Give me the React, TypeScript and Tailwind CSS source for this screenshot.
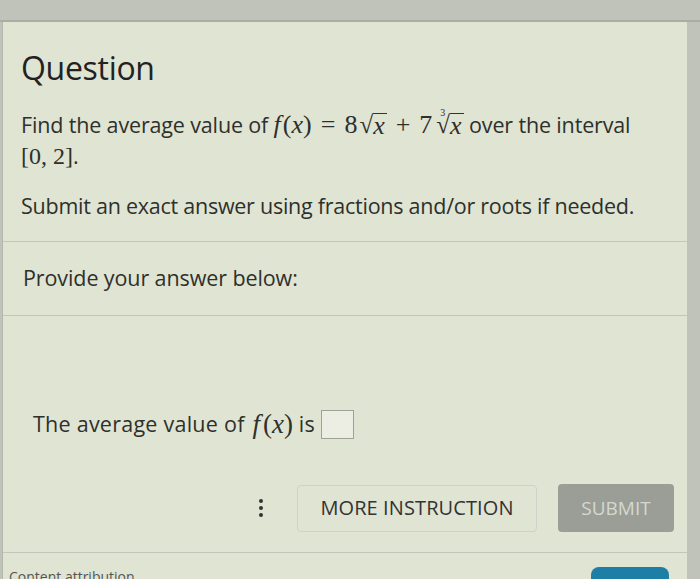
import React from 'react';

function Sqrt({ index, children }: { index?: string; children: React.ReactNode }) {
  return (
    <span className={`relative inline-flex items-end ${index ? 'ml-[4px]' : 'ml-[2px]'}`}>
      {index && <span className="absolute left-[4px] top-[-4px] text-[10px] leading-none">{index}</span>}
      <span className="text-[25px] leading-none">√</span>
      <span className="border-t border-[#333] leading-[23px] pr-[2px] italic">{children}</span>
    </span>
  );
}

function App() {
  const serif = { fontFamily: '"Liberation Serif", serif' };
  return (
    <div
      className="w-[700px] h-[579px] overflow-hidden bg-[#bfc3ba] text-[#2e302c]"
      style={{ fontFamily: '"Open Sans", sans-serif' }}
    >
      <div className="h-[22px] border-b-2 border-[#a9ada4]" />
      <div className="flex">
        <div className="w-[685px] ml-[2px] bg-[#e0e4d3] border-l border-[#b5b9ad]">
          <div className="px-[18px] pt-[26px] pb-[20px] border-b border-[#c3c7ba]">
            <h1 className="text-[32px] leading-[40px] font-medium tracking-[-0.3px] text-[#222]">Question</h1>
            <p className="mt-[21px] text-[21.5px] leading-[31px] tracking-[-0.15px]">
              Find the average value of{' '}
              <span style={serif} className="text-[26px] tracking-normal">
                <i className="mr-[2px]">f</i>(<i>x</i>)<span className="mx-[9px]">=</span>8<Sqrt>x</Sqrt>
                <span className="mx-[9px]">+</span>7<Sqrt index="3">x</Sqrt>
              </span>{' '}
              over the interval
              <br />
              <span style={serif} className="text-[24px] tracking-normal">[0, 2]</span>.
            </p>
            <p className="mt-[19px] text-[21.5px] leading-[30px] tracking-[-0.25px]">
              Submit an exact answer using fractions and/or roots if needed.
            </p>
          </div>
          <div className="px-[20px] h-[74px] flex items-center border-b border-[#c3c7ba]">
            <p className="text-[21.5px] tracking-[-0.1px]">Provide your answer below:</p>
          </div>
          <div className="border-b border-[#c3c7ba]">
            <div className="pl-[30px] pt-[92px] flex items-center text-[21.5px] tracking-[0.25px]">
              <span>The average value of&nbsp;</span>
              <span style={serif} className="ml-[2px] text-[27px] leading-[32px] tracking-normal">
                <i className="mr-[3px]">f</i>(<i>x</i>)
              </span>
              <span>&nbsp;is</span>
              <span className="ml-[6px] inline-block w-[33px] h-[29px] border border-[#9da196] bg-[#eceee3]" />
            </div>
            <div className="mt-[44px] mb-[20px] flex items-center justify-end pr-[13px]">
              <span className="mr-[34px] flex flex-col gap-[3px]">
                <span className="w-[4px] h-[4px] rounded-full bg-[#333]" />
                <span className="w-[4px] h-[4px] rounded-full bg-[#333]" />
                <span className="w-[4px] h-[4px] rounded-full bg-[#333]" />
              </span>
              <button className="w-[240px] h-[47px] border border-[#cfd2c6] rounded-[4px] text-[20px] tracking-[0.1px] text-[#333]">
                MORE INSTRUCTION
              </button>
              <button className="ml-[21px] w-[116px] h-[48px] rounded-[4px] bg-[#9a9e97] text-[19px] text-[#d5d8cf] font-medium">
                SUBMIT
              </button>
            </div>
          </div>
          <div className="flex justify-between items-start pl-[6px] pr-[18px] pt-[13px]">
            <span className="text-[14px] text-[#555]">Content attribution</span>
            <span className="mt-[1px] w-[78px] h-[30px] rounded-[8px] bg-[#1e7fa6]" />
          </div>
        </div>
        <div className="flex-1" />
      </div>
    </div>
  );
}

export default App;
